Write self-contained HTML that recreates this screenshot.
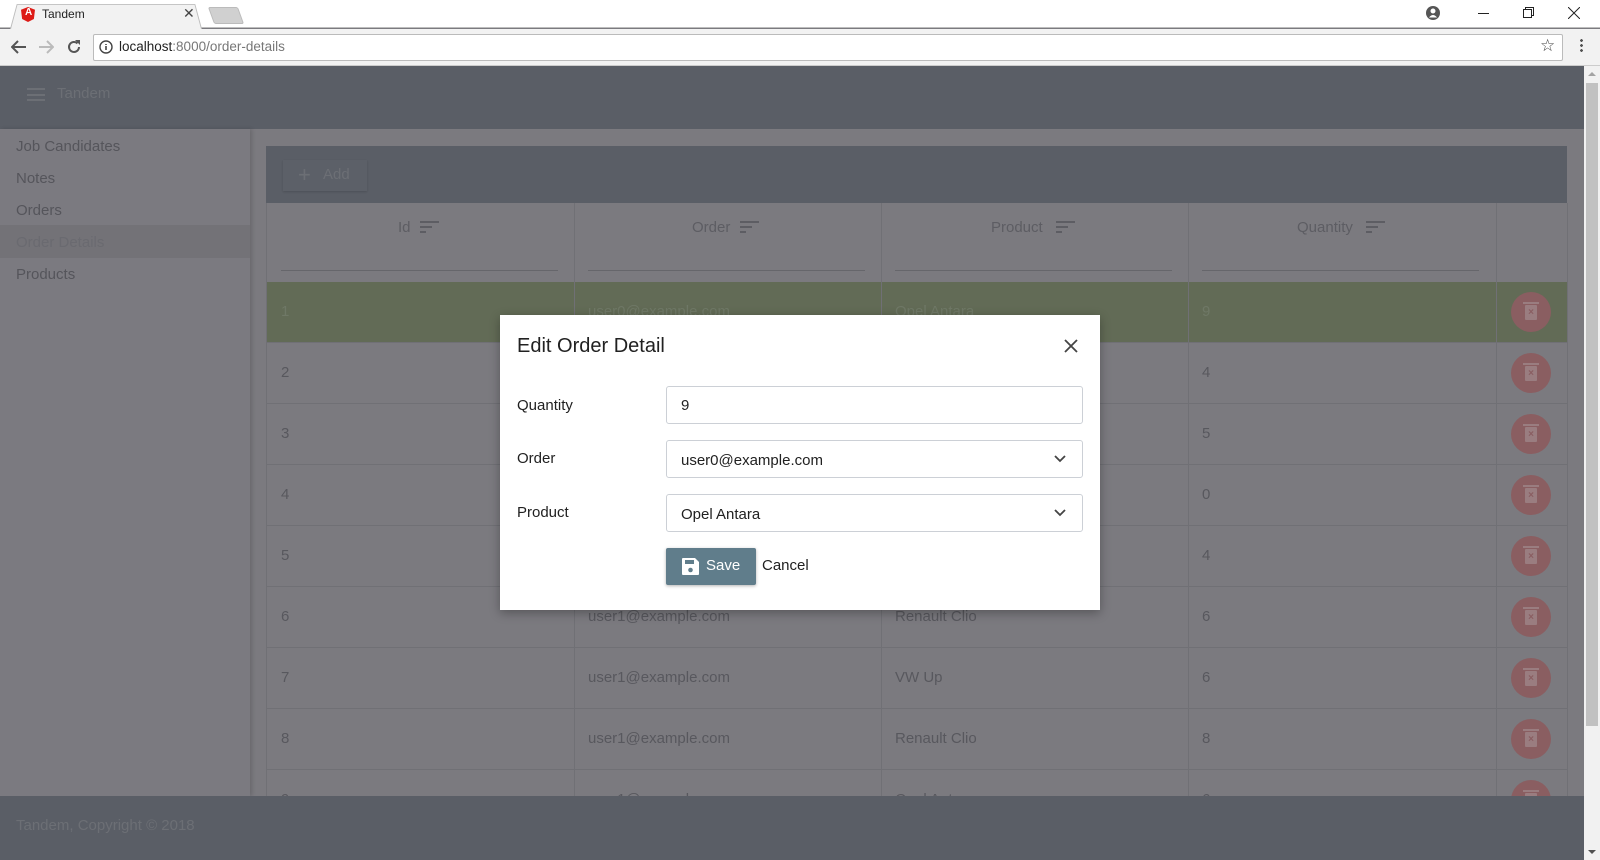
<!DOCTYPE html>
<html><head><meta charset="utf-8"><style>
*{box-sizing:border-box;margin:0;padding:0}
body{width:1600px;height:860px;overflow:hidden;position:relative;font-family:"Liberation Sans",sans-serif;background:#7b7a7f}
.abs{position:absolute}
.t{font-size:15px;color:#58585e;position:absolute;white-space:nowrap}
.circ{position:absolute;width:40px;height:40px;border-radius:50%;background:#8a5e61}
.circ i{position:absolute;left:14px;top:13px;width:12px;height:15px;background:#9a7d80;border-radius:1px;color:#8a5e61;font-size:10px;font-style:normal;font-weight:bold;text-align:center;line-height:15px}
.circ b{position:absolute;left:12px;top:10px;width:16px;height:2px;background:#9a7d80}
</style></head><body>
<div class="abs" style="left:0;top:0;width:1600px;height:28px;background:#fff;border-bottom:1px solid #bdbdbd"></div>
<div class="abs" style="left:10px;top:2px;width:192px;height:27px;background:#f2f2f2;border:1px solid #bdbdbd;border-bottom:none;transform:perspective(50px) rotateX(8deg);transform-origin:bottom"></div>
<div class="abs" style="left:21px;top:7px;width:14px;height:15px;background:#dd1b16;clip-path:polygon(50% 0,100% 18%,92% 80%,50% 100%,8% 80%,0 18%)"></div>
<div class="abs" style="left:25px;top:7px;color:#fff;font-size:10px;font-weight:bold">A</div>
<div class="abs" style="left:42px;top:7px;font-size:12px;color:#222">Tandem</div>
<div class="abs" style="left:183px;top:5px;font-size:14px;color:#444">✕</div>
<div class="abs" style="left:211px;top:7px;width:30px;height:17px;background:#d0d0d0;border:1px solid #bbb;border-radius:2px;transform:skewX(20deg)"></div>
<svg class="abs" style="left:1426px;top:6px" width="14" height="14"><circle cx="7" cy="7" r="7" fill="#555"/><circle cx="7" cy="5" r="2.5" fill="#fff"/><path d="M3 11.5q4-5 8 0" fill="#fff"/></svg>
<div class="abs" style="left:1478px;top:13px;width:11px;height:1px;background:#222"></div>
<svg class="abs" style="left:1523px;top:7px" width="11" height="11"><rect x="0.5" y="2.5" width="8" height="8" fill="none" stroke="#222"/><path d="M2.5 2.5V.5h8v8h-2" fill="none" stroke="#222"/></svg>
<svg class="abs" style="left:1568px;top:7px" width="12" height="12"><path d="M0 0L12 12M12 0L0 12" stroke="#222"/></svg>
<div class="abs" style="left:0;top:29px;width:1600px;height:37px;background:#f2f2f2;border-bottom:1px solid #ccc"></div>
<svg class="abs" style="left:11px;top:40px" width="16" height="14"><path d="M15 7H2M7 1L1 7l6 6" fill="none" stroke="#555" stroke-width="2"/></svg>
<svg class="abs" style="left:38px;top:40px" width="16" height="14"><path d="M1 7h13M9 1l6 6-6 6" fill="none" stroke="#bbb" stroke-width="2"/></svg>
<svg class="abs" style="left:66px;top:39px" width="16" height="16"><path d="M13 8a5 5 0 1 1-1.5-3.6" fill="none" stroke="#555" stroke-width="2"/><path d="M9 1h5v5z" fill="#555"/></svg>
<div class="abs" style="left:93px;top:34px;width:1470px;height:27px;background:#fff;border:1px solid #bbb;border-radius:2px"></div>
<svg class="abs" style="left:99px;top:40px" width="14" height="14"><circle cx="7" cy="7" r="6" fill="none" stroke="#444" stroke-width="1.4"/><path d="M7 6v4M7 4v1" stroke="#444" stroke-width="1.6"/></svg>
<div class="abs" style="left:119px;top:39px;font-size:13.5px;color:#222">localhost<span style="color:#777">:8000/order-details</span></div>
<div class="abs" style="left:1540px;top:36px;font-size:17px;color:#444">☆</div>
<div class="abs" style="left:1580px;top:38px;width:3px;height:14px;background:radial-gradient(circle,#555 1.3px,transparent 1.5px) 0 0/3px 5px"></div>
<div class="abs" style="left:0;top:66px;width:1584px;height:63px;background:#5a5e66"></div>
<div class="abs" style="left:27px;top:88px;width:18px;height:13px;border-top:2px solid #6c6f75;border-bottom:2px solid #6c6f75"><div style="margin-top:3.5px;height:2px;background:#6c6f75"></div></div>
<div class="abs" style="left:57px;top:85px;font-size:15px;color:#6c6f75">Tandem</div>
<div class="abs" style="left:0;top:129px;width:250px;height:667px;background:#7b7a80;box-shadow:2px 0 4px rgba(0,0,0,.15)"></div>
<div class="abs" style="left:0;top:225px;width:250px;height:33px;background:#737277"></div>
<div class="t" style="left:16px;top:138px;color:#55555b">Job Candidates</div>
<div class="t" style="left:16px;top:170px;color:#55555b">Notes</div>
<div class="t" style="left:16px;top:202px;color:#55555b">Orders</div>
<div class="t" style="left:16px;top:234px;color:#6a6a70">Order Details</div>
<div class="t" style="left:16px;top:266px;color:#55555b">Products</div>
<div class="abs" style="left:266px;top:146px;width:1301px;height:57px;background:#5a5e66"></div>
<div class="abs" style="left:283px;top:160px;width:84px;height:31px;background:#5c6068;box-shadow:0 1px 2px rgba(0,0,0,.15)"></div>
<div class="abs" style="left:298px;top:162px;font-size:22px;color:#6c6f75">+</div>
<div class="abs" style="left:323px;top:166px;font-size:15px;color:#6c6f75">Add</div>
<div class="abs" style="left:266px;top:203px;width:1301px;height:593px;border-left:1px solid #707075;overflow:hidden">
<div class="abs" style="left:0;top:79px;width:1301px;height:61px;background:#626b56"></div>
</div>
<div class="abs" style="left:574px;top:203px;width:1px;height:593px;background:#707075"></div>
<div class="abs" style="left:881px;top:203px;width:1px;height:593px;background:#707075"></div>
<div class="abs" style="left:1188px;top:203px;width:1px;height:593px;background:#707075"></div>
<div class="abs" style="left:1496px;top:203px;width:1px;height:593px;background:#707075"></div>
<div class="abs" style="left:1567px;top:203px;width:1px;height:593px;background:#707075"></div>
<div class="abs" style="left:281px;top:270px;width:277px;height:1px;background:#66666b"></div>
<div class="abs" style="left:588px;top:270px;width:277px;height:1px;background:#66666b"></div>
<div class="abs" style="left:895px;top:270px;width:277px;height:1px;background:#66666b"></div>
<div class="abs" style="left:1202px;top:270px;width:277px;height:1px;background:#66666b"></div>
<div id="rows"></div>
<div class="t" style="left:398px;top:219px;color:#5d5d63">Id</div>
<div class="t" style="left:692px;top:219px;color:#5d5d63">Order</div>
<div class="t" style="left:991px;top:219px;color:#5d5d63">Product</div>
<div class="t" style="left:1297px;top:219px;color:#5d5d63">Quantity</div>
<svg class="abs" style="left:420px;top:221px" width="19" height="13"><path d="M0 1h19M0 6h12M0 11h6" stroke="#5d5d63" stroke-width="2"/></svg>
<svg class="abs" style="left:740px;top:221px" width="19" height="13"><path d="M0 1h19M0 6h12M0 11h6" stroke="#5d5d63" stroke-width="2"/></svg>
<svg class="abs" style="left:1056px;top:221px" width="19" height="13"><path d="M0 1h19M0 6h12M0 11h6" stroke="#5d5d63" stroke-width="2"/></svg>
<svg class="abs" style="left:1366px;top:221px" width="19" height="13"><path d="M0 1h19M0 6h12M0 11h6" stroke="#5d5d63" stroke-width="2"/></svg>
<script>
var d=[["1","user0@example.com","Opel Antara","9"],["2","","","4"],["3","","","5"],["4","","","0"],["5","","","4"],["6","user1@example.com","Renault Clio","6"],["7","user1@example.com","VW Up","6"],["8","user1@example.com","Renault Clio","8"],["9","user1@example.com","Opel Antara","6"]];
var h="";for(var i=0;i<d.length;i++){var y=282+61*i;var c=i==0?"#6f7866":"#58585e";
h+='<div class="abs" style="left:266px;top:'+(y+60)+'px;width:1301px;height:1px;background:#707075"></div>';
var xs=[281,588,895,1202];for(var j=0;j<4;j++)h+='<div class="t" style="left:'+xs[j]+'px;top:'+(y+21)+'px;color:'+c+'">'+d[i][j]+'</div>';
h+='<div class="circ" style="left:1511px;top:'+(y+10)+'px"><b></b><i>×</i></div>';}
document.getElementById("rows").innerHTML=h;
</script>
<div class="abs" style="left:0;top:796px;width:1584px;height:64px;background:#5a5e66"></div>
<div class="abs" style="left:16px;top:817px;font-size:15px;color:#6c6f75">Tandem, Copyright © 2018</div>
<div class="abs" style="left:1584px;top:66px;width:16px;height:794px;background:#f1f1f1"></div>
<div class="abs" style="left:1586px;top:83px;width:12px;height:643px;background:#c1c1c1"></div>
<div class="abs" style="left:1588px;top:72px;border:4px solid transparent;border-bottom:4px solid #a3a3a3;border-top:none"></div>
<div class="abs" style="left:1588px;top:850px;border:4px solid transparent;border-top:4px solid #505050;border-bottom:none"></div>
<div class="abs" style="left:500px;top:315px;width:600px;height:295px;background:#fff;box-shadow:0 3px 10px rgba(0,0,0,.3)">
<div class="abs" style="left:17px;top:20px;font-size:20px;color:#212121">Edit Order Detail</div>
<svg class="abs" style="left:564px;top:24px" width="14" height="14"><path d="M1 1L13 13M13 1L1 13" stroke="#444" stroke-width="1.8"/></svg>
<div class="abs" style="left:17px;top:82px;font-size:15px;color:#212121">Quantity</div>
<div class="abs" style="left:17px;top:135px;font-size:15px;color:#212121">Order</div>
<div class="abs" style="left:17px;top:189px;font-size:15px;color:#212121">Product</div>
<div class="abs" style="left:166px;top:71px;width:417px;height:38px;border:1px solid #ccd0d6;border-radius:3px"><span style="position:absolute;left:14px;top:10px;font-size:15px;color:#212121">9</span></div>
<div class="abs" style="left:166px;top:125px;width:417px;height:38px;border:1px solid #ccd0d6;border-radius:3px"><span style="position:absolute;left:14px;top:11px;font-size:15px;color:#212121">user0@example.com</span><svg style="position:absolute;right:16px;top:14px" width="12" height="8"><path d="M1 1l5 5 5-5" fill="none" stroke="#444" stroke-width="1.8"/></svg></div>
<div class="abs" style="left:166px;top:179px;width:417px;height:38px;border:1px solid #ccd0d6;border-radius:3px"><span style="position:absolute;left:14px;top:11px;font-size:15px;color:#212121">Opel Antara</span><svg style="position:absolute;right:16px;top:14px" width="12" height="8"><path d="M1 1l5 5 5-5" fill="none" stroke="#444" stroke-width="1.8"/></svg></div>
<div class="abs" style="left:166px;top:233px;width:90px;height:37px;background:#607d8b;border-radius:2px;box-shadow:0 1px 3px rgba(0,0,0,.3)">
<svg style="position:absolute;left:15px;top:9px" width="19" height="19"><path d="M1 2a1 1 0 0 1 1-1h12l4 4v12a1 1 0 0 1-1 1H2a1 1 0 0 1-1-1z" fill="#fff"/><rect x="4" y="3" width="9" height="4" fill="#607d8b"/><circle cx="9.5" cy="13" r="2.3" fill="#607d8b"/></svg>
<span style="position:absolute;left:40px;top:9px;font-size:15px;color:#fff">Save</span></div>
<div class="abs" style="left:262px;top:242px;font-size:15px;color:#212121">Cancel</div>
</div>
</body></html>
